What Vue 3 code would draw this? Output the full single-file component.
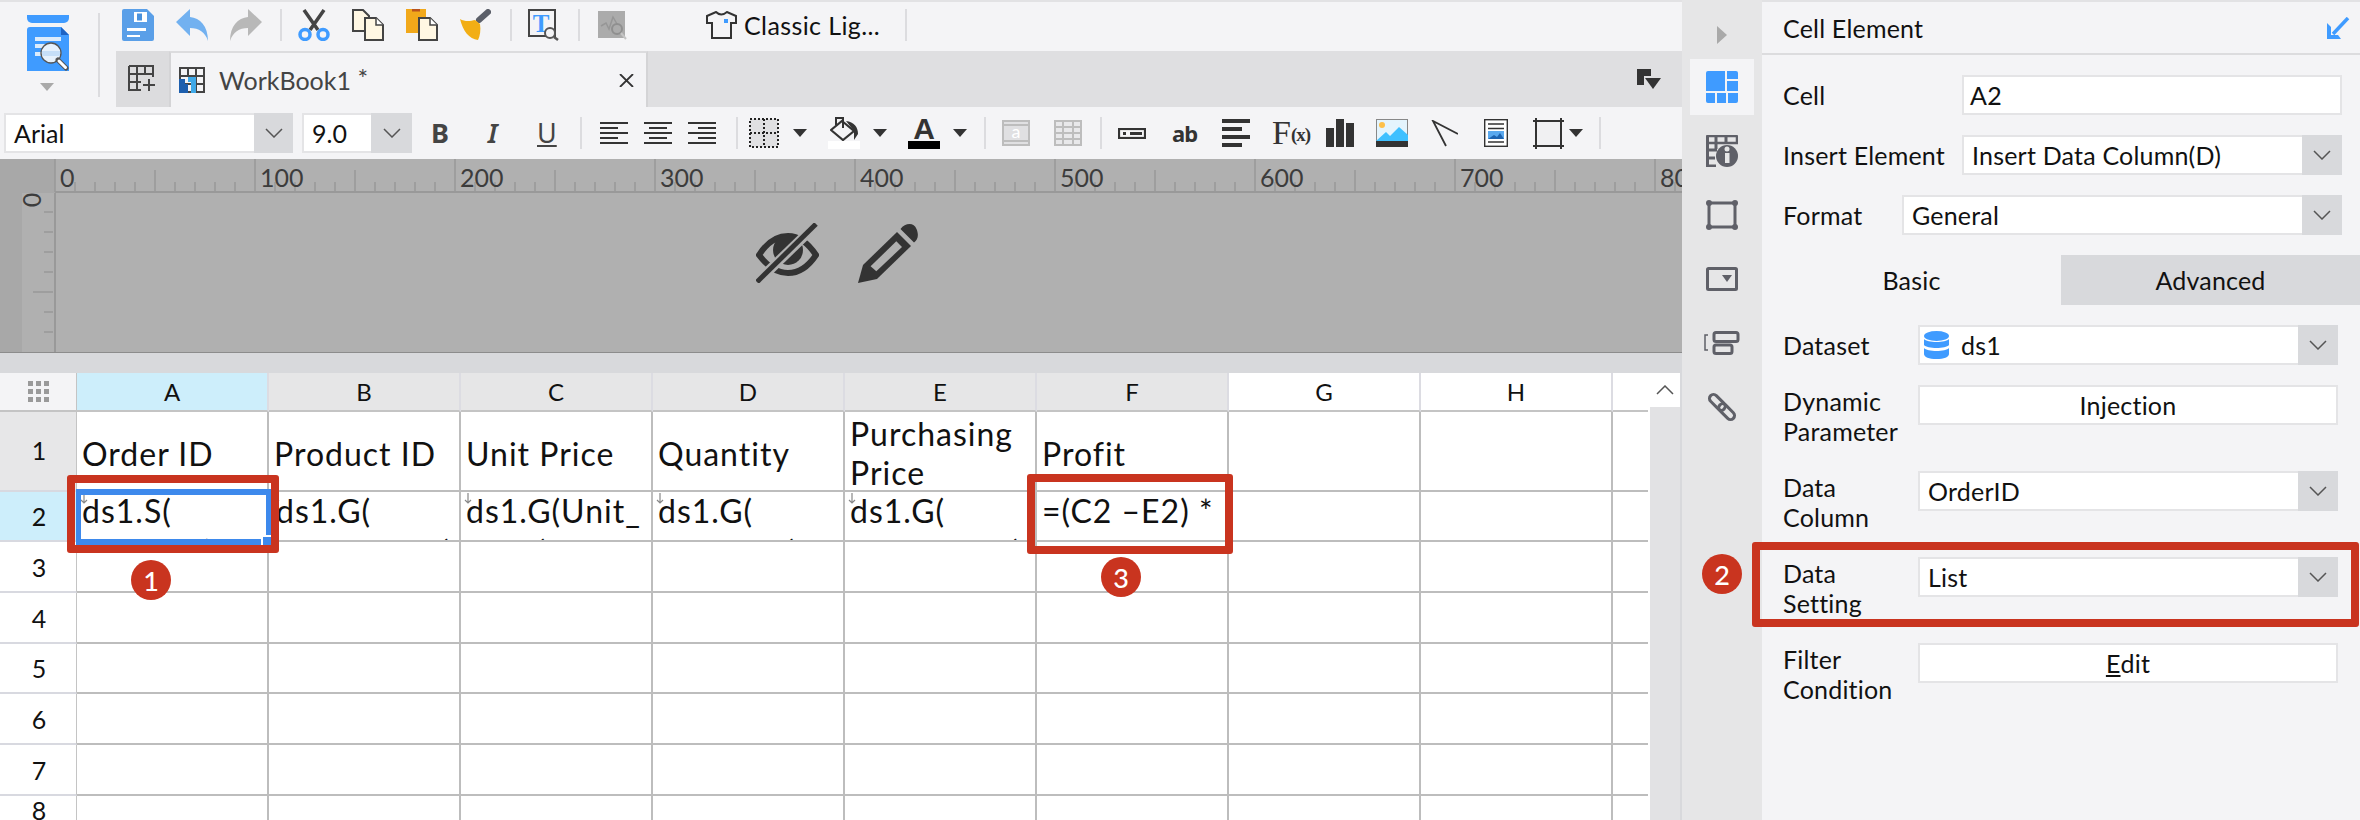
<script setup>
const columns = ['A', 'B', 'C', 'D', 'E', 'F', 'G', 'H']
const usedColumns = ['B', 'C', 'D', 'E', 'F']

const rows = [
  { n: 1, cells: ['Order ID', 'Product ID', 'Unit Price', 'Quantity', 'Purchasing\nPrice', 'Profit', '', ''] },
  { n: 2, cells: ['ds1.S(\nOrderID)', 'ds1.G(\nProduct_ID)', 'ds1.G(Unit_\nPrice)', 'ds1.G(\nQuantity)', 'ds1.G(\nPurchasing)', '=(C2 –E2) *\nD2', '', ''] },
  { n: 3, cells: [] },
  { n: 4, cells: [] },
  { n: 5, cells: [] },
  { n: 6, cells: [] },
  { n: 7, cells: [] },
  { n: 8, cells: [] }
]

const rulerLabels = [0, 100, 200, 300, 400, 500, 600, 700, 800]
const hTicks = Array.from({ length: 82 }, (_, i) => i)
const vTicks = [1, 2, 3, 4, 5, 6, 7]
const gridDots = [0, 1, 2]
</script>

<template>
  <div class="app">
    <div class="left">
      <div class="top">
        <div class="logo-col">
          <div class="logo-box">
            <svg width="42" height="56" viewBox="0 0 42 56">
              <path d="M0 0h42v3a5 5 0 0 1-5 5H5a5 5 0 0 1-5-5z" fill="#3f9bff" />
              <path d="M3 12H34L42 20V56H0V15a3 3 0 0 1 3-3z" fill="#3f9bff" />
              <path d="M34 12L42 20H34z" fill="#1d63c4" />
              <rect x="8" y="22" width="26" height="4" fill="#dcebfb" />
              <rect x="8" y="29" width="12" height="4" fill="#dcebfb" />
              <rect x="8" y="37" width="10" height="4" fill="#dcebfb" />
              <circle cx="24" cy="38" r="10" fill="#e6f1fc" stroke="#555" stroke-width="1.3" />
              <rect x="15" y="36" width="18" height="5" fill="#c6dff8" />
              <path d="M31 45L39 53" stroke="#555" stroke-width="5" stroke-linecap="round" />
              <path d="M32 46L38.5 52.5" stroke="#fff" stroke-width="3" stroke-linecap="round" />
            </svg>
            <span class="logo-caret"></span>
          </div>
          <span class="logo-sep"></span>
        </div>

        <div class="top-right">
          <div class="icon-row">
            <svg class="m6" width="32" height="32" viewBox="0 0 32 32">
              <path d="M2 0H25L32 7V30a2 2 0 0 1-2 2H2a2 2 0 0 1-2-2V2a2 2 0 0 1 2-2z" fill="#5a9fe8" />
              <rect x="12" y="3" width="13" height="10" fill="#fff" />
              <rect x="15" y="4.5" width="5" height="7" fill="#4a92dd" />
              <rect x="5" y="19" width="19" height="3" fill="#fff" />
              <rect x="5" y="26" width="13" height="2" fill="#fff" />
            </svg>
            <svg class="m22" width="32" height="32" viewBox="0 0 32 32">
              <path d="M0 13L14 0V8C24 9 32 17 32 32C29 23 23 19 14 19V27Z" fill="#72b1f0" />
            </svg>
            <svg class="m22" width="32" height="32" viewBox="0 0 32 32">
              <path d="M32 13L18 0V8C8 9 0 17 0 32C3 23 9 19 18 19V27Z" fill="#b8b8b8" />
            </svg>
            <span class="sep m18"></span>
            <svg class="m16" width="32" height="32" viewBox="0 0 32 32">
              <path d="M6 1L20 21M26 1L12 21" stroke="#444" stroke-width="3.5" fill="none" />
              <circle cx="7" cy="25.5" r="5" fill="none" stroke="#3f9bff" stroke-width="3.5" />
              <circle cx="25" cy="25.5" r="5" fill="none" stroke="#3f9bff" stroke-width="3.5" />
            </svg>
            <svg class="m22" width="32" height="32" viewBox="0 0 32 32">
              <path d="M1 1H11L17 7V22H1Z" fill="#fff7e3" stroke="#444" stroke-width="2" />
              <path d="M13 9H24L31 16V31H13Z" fill="#fff7e3" stroke="#444" stroke-width="2" />
              <path d="M24 9V16H31" fill="#fff" stroke="#444" stroke-width="1.5" />
            </svg>
            <svg class="m22" width="32" height="32" viewBox="0 0 32 32">
              <rect width="20" height="24" fill="#f1a81a" />
              <rect x="6" width="8" height="2.5" fill="#b9521d" />
              <path d="M13 9H24L31 16V31H13Z" fill="#fff7e3" stroke="#444" stroke-width="2" />
              <path d="M24 9V16H31" fill="#fff" stroke="#444" stroke-width="1.5" />
            </svg>
            <svg class="m22" width="31" height="32" viewBox="0 0 31 32">
              <path d="M28 3L19 11" stroke="#5b5f69" stroke-width="6" stroke-linecap="round" />
              <path d="M0 10C5 13 11 12 15 11L20 15C21 21 20 27 18 31C9 30 3 22 0 10Z" fill="#f2ae14" />
            </svg>
            <span class="sep m19"></span>
            <svg class="m16" width="31" height="32" viewBox="0 0 31 32">
              <rect x="1" y="1" width="26" height="26" fill="none" stroke="#444" stroke-width="2" />
              <text x="13" y="23" class="t-glyph" text-anchor="middle">T</text>
              <circle cx="22" cy="24" r="5" fill="#f4f4f6" stroke="#555" stroke-width="2" />
              <path d="M26 28L30 31" stroke="#555" stroke-width="2.5" />
            </svg>
            <span class="sep m19"></span>
            <svg class="m18" width="29" height="32" viewBox="0 0 29 32">
              <rect y="2" width="27" height="27" fill="#ababab" />
              <path d="M3 17L8 14L11 20L15 8L19 15" fill="none" stroke="#969696" stroke-width="1.5" />
              <circle cx="19" cy="20" r="5" fill="none" stroke="#8f8f8f" stroke-width="2" />
              <path d="M23 24L28 30" stroke="#c4c4c4" stroke-width="2" />
            </svg>
            <svg class="m79 shirt" width="31" height="28" viewBox="0 0 31 28">
              <path d="M10 1Q15 6 21 1L30 5V12H25V27H6V12H1V5Z" fill="none" stroke="#333" stroke-width="2" />
              <rect x="18" y="8" width="4" height="4" fill="#3f9bff" />
            </svg>
            <span class="theme-name m7">Classic Lig...</span>
            <span class="sep m21"></span>
          </div>

          <div class="tab-row">
            <div class="tab-add">
              <svg width="28" height="26" viewBox="0 0 28 26">
                <path d="M1 1H25V12M1 1V25H13M1 9H25M9 1V25M17 1V9M1 17H13" fill="none" stroke="#444" stroke-width="2" />
                <path d="M21 14V26M15 20H27" fill="none" stroke="#444" stroke-width="2" />
              </svg>
            </div>
            <div class="tab">
              <svg width="26" height="26" viewBox="0 0 26 26">
                <path d="M1 1H25V25H1ZM1 9H25M1 17H25M9 1V9M17 1V25" fill="none" stroke="#444" stroke-width="2" />
                <path d="M0 12H6V17H9V26H0Z" fill="#1d5fae" />
                <path d="M9 10H17V26H12V15H9Z" fill="#3fa9e8" />
              </svg>
              <span class="tab-title">WorkBook1 <span class="tab-star">*</span></span>
              <svg class="tab-close" width="15" height="13" viewBox="0 0 15 13">
                <path d="M1 0L14 13M14 0L1 13" stroke="#333" stroke-width="1.8" />
              </svg>
            </div>
            <div class="tab-rest">
              <svg width="24" height="20" viewBox="0 0 24 20">
                <path d="M0 0H14V7H7V16H0Z" fill="#333" />
                <path d="M8 9H24L16 20Z" fill="#333" />
              </svg>
            </div>
          </div>
        </div>
      </div>

      <div class="format-row">
        <div class="combo font-combo">
          <span class="combo-text">Arial</span>
          <span class="combo-btn"><svg width="18" height="10" viewBox="0 0 18 10"><path d="M1 1L9 9L17 1" fill="none" stroke="#555" stroke-width="1.5" /></svg></span>
        </div>
        <div class="combo size-combo m9">
          <span class="combo-text">9.0</span>
          <span class="combo-btn"><svg width="18" height="10" viewBox="0 0 18 10"><path d="M1 1L9 9L17 1" fill="none" stroke="#555" stroke-width="1.5" /></svg></span>
        </div>
        <span class="fmt-b m19">B</span>
        <span class="fmt-i m37">I</span>
        <span class="fmt-u m38">U</span>
        <span class="sep sep-f m25"></span>
        <svg class="m18" width="28" height="22" viewBox="0 0 28 22"><path d="M0 1H28M0 6H18M0 11H28M0 16H18M0 21H28" stroke="#333" stroke-width="2" /></svg>
        <svg class="m16" width="28" height="22" viewBox="0 0 28 22"><path d="M0 1H28M5 6H23M0 11H28M5 16H23M0 21H28" stroke="#333" stroke-width="2" /></svg>
        <svg class="m16" width="28" height="22" viewBox="0 0 28 22"><path d="M0 1H28M10 6H28M0 11H28M10 16H28M0 21H28" stroke="#333" stroke-width="2" /></svg>
        <span class="sep sep-f m20"></span>
        <svg class="m11" width="30" height="30" viewBox="0 0 30 30">
          <rect x="1" y="1" width="28" height="28" fill="#e0e0e2" stroke="#222" stroke-width="2" stroke-dasharray="2 2" />
          <path d="M15 1V29M1 15H29" stroke="#222" stroke-width="2" stroke-dasharray="2 2" />
        </svg>
        <span class="caret m14"></span>
        <div class="color-btn m21">
          <svg width="28" height="24" viewBox="0 0 28 24">
            <path d="M12 4L24 14L13 23L1 13Z" fill="none" stroke="#333" stroke-width="2.2" />
            <path d="M6 8V1H13V11" fill="none" stroke="#333" stroke-width="2" />
            <path d="M16 4C24 5 28 10 28 17L24 23V14Z" fill="#333" />
          </svg>
          <span class="color-bar bar-white"></span>
        </div>
        <span class="caret m13"></span>
        <div class="color-btn m21">
          <span class="fmt-a">A</span>
          <span class="color-bar bar-black"></span>
        </div>
        <span class="caret m13"></span>
        <span class="sep sep-f m17"></span>
        <svg class="m16" width="28" height="26" viewBox="0 0 28 26">
          <rect x="1" y="1" width="26" height="24" fill="#e0e0e2" stroke="#bdbdbd" stroke-width="2" />
          <path d="M1 5H27M1 21H27" stroke="#bdbdbd" stroke-width="2" />
          <text x="14" y="18" class="dis-a" text-anchor="middle">a</text>
        </svg>
        <svg class="m24" width="28" height="26" viewBox="0 0 28 26">
          <path d="M1 1H27V25H1ZM1 7H27M1 13H27M1 19H27M9 1V25M19 1V25" fill="#e8e8ea" stroke="#bdbdbd" stroke-width="2" />
        </svg>
        <span class="sep sep-f m18"></span>
        <svg class="m16" width="28" height="11" viewBox="0 0 28 11">
          <rect x="1" y="1" width="26" height="9" fill="none" stroke="#333" stroke-width="2.2" />
          <rect x="5" y="4" width="3" height="3" fill="#333" />
          <rect x="12" y="4" width="12" height="3" fill="#333" />
        </svg>
        <span class="fmt-ab m26">ab</span>
        <svg class="m26" width="28" height="28" viewBox="0 0 28 28"><path d="M0 2H28M0 10H20M0 18H28M0 26H20" stroke="#333" stroke-width="4" /></svg>
        <span class="fmt-fx m22"><span class="fx-f">F</span><span class="fx-x">(x)</span></span>
        <svg class="m22" width="28" height="28" viewBox="0 0 28 28">
          <rect y="9" width="8" height="19" fill="#333" />
          <rect x="10" width="8" height="28" fill="#333" />
          <rect x="20" y="4" width="8" height="24" fill="#333" />
        </svg>
        <svg class="m22" width="32" height="28" viewBox="0 0 32 28">
          <rect width="32" height="28" fill="#e4f4fd" />
          <rect x="0.5" y="0.5" width="31" height="27" fill="none" stroke="#888" />
          <circle cx="6" cy="6" r="3" fill="#fdc04a" />
          <path d="M0 22L10 13L14 17L23 8L32 16V23H0Z" fill="#3fc0ff" />
          <rect y="22" width="32" height="6" fill="#333" />
        </svg>
        <svg class="m23" width="27" height="27" viewBox="0 0 27 27"><path d="M15 26L2 1L27 14" fill="none" stroke="#333" stroke-width="1.8" /></svg>
        <svg class="m26" width="24" height="28" viewBox="0 0 24 28">
          <rect x="0.7" y="0.7" width="22.6" height="26.6" fill="#fff" stroke="#333" stroke-width="1.4" />
          <path d="M4 5H20M4 9.5H20M4 23H20" stroke="#333" stroke-width="1.6" />
          <rect x="4" y="12" width="16" height="8" fill="#5aa9ef" />
          <path d="M4 20L10 16L13 18L16 14L20 20Z" fill="#1d63b0" />
        </svg>
        <svg class="m25" width="31" height="31" viewBox="0 0 31 31">
          <rect x="3" y="3" width="25" height="25" fill="#f0f0f2" stroke="#333" stroke-width="2" />
          <path d="M3 0V6M28 0V6M3 25V31M28 25V31M0 3H6M25 3H31M0 28H6M25 28H31" stroke="#333" stroke-width="2" />
        </svg>
        <span class="caret m5"></span>
        <span class="sep sep-f m16"></span>
      </div>

      <div class="ruler-zone">
        <svg class="h-ruler" width="1682" height="34" viewBox="0 0 1682 34">
          <rect width="55" height="34" fill="#a8a8a8" />
          <template v-for="i in hTicks" :key="i">
            <path :d="`M${55 + i * 20} ${i % 10 === 0 ? 0 : i % 5 === 0 ? 11 : 23}V33`" stroke="#999" stroke-width="1.5" />
          </template>
          <path d="M55 33H1682" stroke="#999" stroke-width="2" />
          <text v-for="(label, i) in rulerLabels" :key="label" :x="60 + i * 200" y="28" class="ruler-text">{{ label }}</text>
        </svg>
        <div class="ruler-body">
          <svg class="v-ruler" width="56" height="159" viewBox="0 0 56 159">
            <rect width="22" height="159" fill="#a8a8a8" />
            <rect x="22" width="33" height="159" fill="#b0b0b0" />
            <path d="M55 0V159" stroke="#999" stroke-width="2" />
            <template v-for="i in vTicks" :key="i">
              <path :d="`M${i === 5 ? 33 : 44} ${19 + (i - 1) * 20}H53`" stroke="#999" stroke-width="1.5" />
            </template>
          </svg>
          <span class="v-zero">0</span>
          <div class="canvas">
            <svg width="63" height="60" viewBox="0 0 63 60">
              <path d="M3 32C12 18 22 13 32 13C42 13 52 20 60 32C52 44 42 50 32 50C22 50 12 44 3 32Z" fill="none" stroke="#333" stroke-width="6" />
              <circle cx="32" cy="27" r="15" fill="#333" />
              <path d="M2 58L60 2" stroke="#b0b0b0" stroke-width="10" />
              <path d="M1 59L60 1" stroke="#333" stroke-width="5" />
            </svg>
            <svg class="pencil" width="60" height="60" viewBox="0 0 60 60">
              <path d="M0 60L5 42L39 9L53 23L19 56Z" fill="#333" />
              <path d="M12.6 43.3L38.3 18.3L44 24L18.3 48.3Z" fill="#b0b0b0" />
              <path d="M42.5 6C47 0 56 -1 58.5 6C61 12 60 17 56 19.5Z" fill="#333" />
            </svg>
          </div>
        </div>
      </div>
      <div class="ruler-gap"></div>

      <div class="sheet-wrap">
        <div class="sheet">
          <div class="corner">
            <div class="dots">
              <template v-for="a in gridDots" :key="a">
                <i v-for="b in gridDots" :key="b"></i>
              </template>
            </div>
          </div>
          <div
            v-for="c in columns"
            :key="c"
            class="col-head"
            :class="{ selected: c === 'A', used: usedColumns.includes(c) }"
          >{{ c }}</div>
          <div class="col-tail"></div>

          <template v-for="row in rows" :key="row.n">
            <div class="row-head" :class="'rh' + row.n">{{ row.n }}</div>
            <div
              v-for="(c, i) in columns"
              :key="c"
              class="cell"
              :class="{ 'head-cell': row.n === 1, 'data-cell': row.n === 2, 'offset-b': row.n === 2 && c === 'B' }"
            >
              <svg v-if="row.n === 2 && i < 5" class="expand" width="8" height="11" viewBox="0 0 8 11">
                <path d="M4 0V10M1 7L4 10L7 7" fill="none" stroke="#888" stroke-width="1.2" />
              </svg>
              <span>{{ row.cells[i] }}</span>
            </div>
            <div class="cell-tail"></div>
          </template>
        </div>
        <div class="scrollbar">
          <div class="scroll-up">
            <svg width="18" height="10" viewBox="0 0 18 10"><path d="M1 9L9 1L17 9" fill="none" stroke="#555" stroke-width="1.5" /></svg>
          </div>
          <div class="scroll-track"></div>
        </div>
      </div>
    </div>

    <div class="strip">
      <svg class="strip-arrow" width="10" height="18" viewBox="0 0 10 18"><path d="M0 0L10 9L0 18Z" fill="#a9a9a9" /></svg>
      <div class="strip-item active">
        <svg width="32" height="32" viewBox="0 0 32 32">
          <path d="M2 0H19V20H0V2a2 2 0 0 1 2-2zM21 0H30a2 2 0 0 1 2 2V8H21zM21 10H32V20H21zM0 22H9V32H2a2 2 0 0 1-2-2zM11 22H20V32H11zM22 22H32V30a2 2 0 0 1-2 2H22z" fill="#3f9bff" />
        </svg>
      </div>
      <div class="strip-item">
        <svg width="32" height="32" viewBox="0 0 32 32">
          <path d="M2 1H30a1 1 0 0 1 1 1V8H1V2a1 1 0 0 1 1-1z" fill="none" stroke="#5f6068" stroke-width="2.5" />
          <path d="M1.5 2V31H10M1.5 15H11M1.5 23H9M10 2V14M20 2V8" fill="none" stroke="#5f6068" stroke-width="3" />
          <circle cx="21" cy="21" r="11" fill="#5f6068" />
          <rect x="19" y="18" width="4.5" height="10" fill="#e6e6e7" />
          <circle cx="21" cy="14" r="2.5" fill="#e6e6e7" />
        </svg>
      </div>
      <div class="strip-item">
        <svg width="32" height="30" viewBox="0 0 32 30">
          <rect x="3" y="3" width="26" height="24" fill="none" stroke="#5f6068" stroke-width="3" />
          <circle cx="3" cy="3" r="3" fill="#5f6068" />
          <circle cx="29" cy="3" r="3" fill="#5f6068" />
          <circle cx="3" cy="27" r="3" fill="#5f6068" />
          <circle cx="29" cy="27" r="3" fill="#5f6068" />
        </svg>
      </div>
      <div class="strip-item">
        <svg width="32" height="24" viewBox="0 0 32 24">
          <rect x="1.5" y="1.5" width="29" height="21" rx="1" fill="none" stroke="#5f6068" stroke-width="3" />
          <path d="M16 8H26L21 15Z" fill="#5f6068" />
        </svg>
      </div>
      <div class="strip-item">
        <svg width="36" height="24" viewBox="0 0 36 24">
          <path d="M4 4H1V19H4" fill="none" stroke="#5f6068" stroke-width="1.5" />
          <rect x="10" y="1.5" width="24" height="9" rx="2" fill="none" stroke="#5f6068" stroke-width="3" />
          <rect x="10" y="14" width="18" height="8.5" rx="2" fill="none" stroke="#5f6068" stroke-width="3" />
        </svg>
      </div>
      <div class="strip-item">
        <svg width="30" height="30" viewBox="0 0 30 30">
          <rect x="1" y="6" width="19" height="8" rx="4" fill="none" stroke="#5f6068" stroke-width="3" transform="rotate(45 10 10)" />
          <rect x="10" y="16" width="19" height="8" rx="4" fill="none" stroke="#5f6068" stroke-width="3" transform="rotate(45 20 20)" />
        </svg>
      </div>
    </div>

    <div class="panel">
      <div class="panel-head">
        <span>Cell Element</span>
        <svg width="23" height="22" viewBox="0 0 23 22">
          <path d="M21 1L6 17" stroke="#3f9bff" stroke-width="3.5" />
          <path d="M0 6V22H14L11 18H4V10Z" fill="#3f9bff" />
        </svg>
      </div>

      <div class="form-top">
        <div class="f-row">
          <label class="lbl-wide">Cell</label>
          <div class="input">A2</div>
        </div>
        <div class="f-row">
          <label class="lbl-wide">Insert Element</label>
          <div class="combo form-combo">
            <span class="combo-text">Insert Data Column(D)</span>
            <span class="combo-btn wide"><svg width="18" height="10" viewBox="0 0 18 10"><path d="M1 1L9 9L17 1" fill="none" stroke="#555" stroke-width="1.5" /></svg></span>
          </div>
        </div>
        <div class="f-row">
          <label class="lbl-narrow">Format</label>
          <div class="combo form-combo">
            <span class="combo-text">General</span>
            <span class="combo-btn wide"><svg width="18" height="10" viewBox="0 0 18 10"><path d="M1 1L9 9L17 1" fill="none" stroke="#555" stroke-width="1.5" /></svg></span>
          </div>
        </div>
      </div>

      <div class="tabs">
        <div class="tab-basic">Basic</div>
        <div class="tab-adv">Advanced</div>
      </div>

      <div class="form-bottom">
        <div class="b-row single">
          <label>Dataset</label>
          <div class="combo form-combo">
            <span class="combo-text with-icon">
              <svg width="25" height="28" viewBox="0 0 25 28">
                <ellipse cx="12.5" cy="5" rx="12.5" ry="5" fill="#3f9bff" />
                <path d="M0 8C3 12 22 12 25 8V14C22 18 3 18 0 14Z" fill="#3f9bff" />
                <path d="M0 17C3 21 22 21 25 17V23C25 26 20 28 12.5 28S0 26 0 23Z" fill="#3f9bff" />
              </svg>
              ds1
            </span>
            <span class="combo-btn wide"><svg width="18" height="10" viewBox="0 0 18 10"><path d="M1 1L9 9L17 1" fill="none" stroke="#555" stroke-width="1.5" /></svg></span>
          </div>
        </div>
        <div class="b-row">
          <label>Dynamic<br />Parameter</label>
          <div class="btn">Injection</div>
        </div>
        <div class="b-row">
          <label>Data<br />Column</label>
          <div class="combo form-combo">
            <span class="combo-text">OrderID</span>
            <span class="combo-btn wide"><svg width="18" height="10" viewBox="0 0 18 10"><path d="M1 1L9 9L17 1" fill="none" stroke="#555" stroke-width="1.5" /></svg></span>
          </div>
        </div>
        <div class="b-row">
          <label>Data<br />Setting</label>
          <div class="combo form-combo">
            <span class="combo-text">List</span>
            <span class="combo-btn wide"><svg width="18" height="10" viewBox="0 0 18 10"><path d="M1 1L9 9L17 1" fill="none" stroke="#555" stroke-width="1.5" /></svg></span>
          </div>
        </div>
        <div class="b-row">
          <label>Filter<br />Condition</label>
          <div class="btn"><u>E</u>dit</div>
        </div>
      </div>
    </div>

    <!-- selection and callouts drawn over the screenshot -->
    <div class="selection"><span class="sel-handle"></span></div>
    <div class="callout box-1"></div>
    <div class="callout box-2"></div>
    <div class="callout box-3"></div>
    <div class="badge badge-1">1</div>
    <div class="badge badge-2">2</div>
    <div class="badge badge-3">3</div>
  </div>
</template>

<style>
body {
  margin: 0;
  overflow: hidden;
}
</style>

<style scoped>
.app {
  position: relative;
  display: flex;
  width: 2360px;
  height: 820px;
  overflow: hidden;
  background: #f4f4f6;
  font-family: Lato, "Liberation Sans", sans-serif;
  color: #111;
}
.m5 { margin-left: 5px; }
.m6 { margin-left: 6px; }
.m7 { margin-left: 7px; }
.m9 { margin-left: 9px; }
.m11 { margin-left: 11px; }
.m13 { margin-left: 13px; }
.m14 { margin-left: 14px; }
.m16 { margin-left: 16px; }
.m17 { margin-left: 17px; }
.m18 { margin-left: 18px; }
.m19 { margin-left: 19px; }
.m20 { margin-left: 20px; }
.m21 { margin-left: 21px; }
.m22 { margin-left: 22px; }
.m23 { margin-left: 23px; }
.m24 { margin-left: 24px; }
.m25 { margin-left: 25px; }
.m26 { margin-left: 26px; }
.m37 { margin-left: 37px; }
.m38 { margin-left: 38px; }
.m79 { margin-left: 79px; }

.left {
  width: 1682px;
  flex: none;
  display: flex;
  flex-direction: column;
}
.top {
  display: flex;
  height: 107px;
  flex: none;
  border-top: 2px solid #e2e2e4;
  box-sizing: border-box;
}
.logo-col {
  width: 116px;
  flex: none;
  display: flex;
  align-items: flex-start;
}
.logo-box {
  width: 98px;
  display: flex;
  flex-direction: column;
  align-items: center;
  padding-top: 13px;
  box-sizing: border-box;
}
.logo-box svg { margin-left: -3px; }
.logo-caret {
  margin-top: 12px;
  margin-left: -4px;
  border-left: 7px solid transparent;
  border-right: 7px solid transparent;
  border-top: 8px solid #a9a9a9;
}
.logo-sep {
  width: 2px;
  height: 84px;
  margin-top: 11px;
  background: #dcdcdf;
}
.top-right {
  flex: 1;
  display: flex;
  flex-direction: column;
  min-width: 0;
}
.icon-row {
  height: 49px;
  flex: none;
  display: flex;
  align-items: flex-start;
  padding-top: 7px;
  box-sizing: border-box;
}
.icon-row svg { flex: none; }
.sep {
  flex: none;
  width: 2px;
  height: 32px;
  background: #dcdcdf;
}
.shirt { margin-top: 2px; }
.theme-name {
  width: 140px;
  flex: none;
  font-size: 25px;
  line-height: 32px;
  letter-spacing: 0.4px;
  white-space: nowrap;
}
.tab-row {
  flex: 1;
  display: flex;
  background: #dfdfe1;
}
.tab-add {
  width: 53px;
  flex: none;
  padding: 14px 0 0 12px;
  box-sizing: border-box;
  background: #dcdcde;
}
.tab {
  width: 479px;
  flex: none;
  display: flex;
  align-items: center;
  padding: 0 12px 0 8px;
  box-sizing: border-box;
  background: #f4f4f6;
  border-top: 2px solid #dcdcde;
  border-left: 2px solid #d4d4d6;
  border-right: 2px solid #d4d4d6;
  color: #444;
}
.tab-title {
  margin-left: 14px;
  font-size: 25px;
}
.tab-star {
  position: relative;
  top: -2px;
}
.tab-close { margin-left: auto; }
.tab-rest {
  flex: 1;
  display: flex;
  align-items: flex-start;
  justify-content: flex-end;
  padding: 18px 21px 0 0;
}

.format-row {
  height: 52px;
  flex: none;
  display: flex;
  align-items: center;
  padding-left: 4px;
  box-sizing: border-box;
}
.format-row svg { flex: none; }
.combo {
  display: flex;
  height: 40px;
  flex: none;
  box-sizing: border-box;
  background: #fff;
}
.combo-text {
  flex: 1;
  min-width: 0;
  display: flex;
  align-items: center;
  padding-left: 8px;
  border: 2px solid #e4e4e6;
  border-right: 0;
  font-size: 25px;
  white-space: nowrap;
}
.combo-btn {
  width: 39px;
  flex: none;
  display: flex;
  align-items: center;
  justify-content: center;
  background: #d8d9dc;
}
.combo-btn.wide { width: 40px; }
.font-combo { width: 289px; }
.size-combo { width: 110px; }
.size-combo .combo-btn { width: 41px; }
.fmt-b, .fmt-i, .fmt-u {
  width: 18px;
  flex: none;
  text-align: center;
  font-size: 27px;
  line-height: 30px;
  color: #444;
  font-family: "Noto Sans", sans-serif;
}
.fmt-b { font-weight: 700; }
.fmt-i { font-style: italic; width: 13px; font-weight: 600; }
.fmt-u { text-decoration: underline; }
.sep-f { height: 32px; }
.caret {
  flex: none;
  border-left: 7px solid transparent;
  border-right: 7px solid transparent;
  border-top: 8px solid #333;
}
.color-btn {
  width: 32px;
  flex: none;
  display: flex;
  flex-direction: column;
  align-items: center;
  height: 32px;
}
.color-bar {
  width: 32px;
  height: 8px;
  flex: none;
}
.bar-white { background: #fff; }
.bar-black { background: #000; }
.fmt-a {
  height: 24px;
  font-family: "Liberation Sans", sans-serif;
  font-weight: 700;
  font-size: 30px;
  line-height: 24px;
  color: #333;
}
.fmt-ab {
  width: 24px;
  flex: none;
  font-family: "Noto Sans", sans-serif;
  font-weight: 700;
  font-size: 22px;
  color: #333;
  letter-spacing: -1px;
}
.fmt-fx {
  width: 32px;
  flex: none;
  display: flex;
  align-items: center;
  font-family: "Liberation Serif", serif;
  color: #333;
}
.fx-f { font-size: 34px; line-height: 34px; }
.fx-x { font-size: 19px; font-weight: 700; letter-spacing: -1px; line-height: 22px; margin-top: 4px; }
.t-glyph {
  font-family: "Liberation Serif", serif;
  font-weight: 700;
  font-size: 25px;
  fill: #3f9bff;
}
.dis-a {
  font-size: 18px;
  fill: #fff;
}

.ruler-zone {
  height: 193px;
  flex: none;
  display: flex;
  flex-direction: column;
  background: #b0b0b0;
  border-bottom: 1px solid #8c8c8c;
}
.h-ruler { flex: none; }
.ruler-text {
  font-size: 25px;
  fill: #3c3c3c;
}
.ruler-body {
  position: relative;
  flex: 1;
  display: flex;
}
.v-ruler { flex: none; }
.v-zero {
  position: absolute;
  left: 23px;
  top: 0;
  width: 20px;
  height: 14px;
  display: flex;
  align-items: center;
  justify-content: center;
  transform: rotate(90deg);
  font-size: 25px;
  color: #3c3c3c;
}
.canvas {
  flex: 1;
  display: flex;
  align-items: flex-start;
  padding: 30px 0 0 700px;
  box-sizing: border-box;
}
.pencil { margin-left: 39px; }
.ruler-gap {
  height: 20px;
  flex: none;
  background: #d8d9dc;
}

.sheet-wrap {
  flex: 1;
  display: flex;
  min-height: 0;
  background: #fff;
}
.sheet {
  width: 1648px;
  flex: none;
  display: grid;
  grid-template-columns: 77px repeat(8, 192px) 35px;
  grid-template-rows: 39px 80px 50px 51px 51px 50px 51px 51px 30px;
  overflow: hidden;
  font-size: 32px;
  color: #111;
}
.corner {
  display: flex;
  align-items: center;
  justify-content: center;
  background: #f4f4f6;
  border-right: 1px solid #c4c4c4;
  border-bottom: 2px solid #c4c4c4;
  box-sizing: border-box;
}
.dots {
  display: grid;
  grid-template-columns: repeat(3, 5px);
  gap: 3px;
}
.dots i {
  width: 5px;
  height: 5px;
  background: #9a9a9a;
}
.col-head, .col-tail {
  display: flex;
  align-items: center;
  justify-content: center;
  font-size: 24px;
  border-bottom: 2px solid #c4c4c4;
  box-sizing: border-box;
  background: #fff;
}
.col-head { border-right: 2px solid #dcdce2; }
.col-head.used { background: #e6e6e7; }
.col-head.selected { background: #cdeefb; }
.row-head {
  display: flex;
  align-items: center;
  justify-content: center;
  padding-left: 2px;
  font-size: 25px;
  border-right: 1px solid #c4c4c4;
  border-bottom: 2px solid #d8d9e0;
  box-sizing: border-box;
  background: #fff;
}
.rh1 { background: #e7e7e8; padding-bottom: 2px; }
.rh2 { background: #cdeefb; }
.cell, .cell-tail {
  position: relative;
  border-right: 2px solid #bdbdbd;
  border-bottom: 2px solid #bdbdbd;
  box-sizing: border-box;
  overflow: hidden;
}
.cell-tail { border-right: 0; }
.cell span {
  display: block;
  white-space: pre-line;
  padding-left: 5px;
  letter-spacing: 1px;
}
.head-cell {
  display: flex;
  align-items: center;
  padding-top: 4px;
  line-height: 39px;
}
.data-cell { line-height: 41px; }
.data-cell span { margin-top: -2px; }
.offset-b span { padding-left: 7px; }
.expand {
  position: absolute;
  left: 3px;
  top: 1px;
}
.scrollbar {
  flex: 1;
  display: flex;
  flex-direction: column;
  padding: 2px 0 0 2px;
  box-sizing: border-box;
  border-right: 2px solid #d8d9dc;
}
.scroll-up {
  height: 30px;
  flex: none;
  display: flex;
  align-items: center;
  justify-content: center;
}
.scroll-track {
  flex: 1;
  margin-top: 2px;
  background: #e2e2e4;
}

.strip {
  width: 80px;
  flex: none;
  display: flex;
  flex-direction: column;
  align-items: center;
  background: #e6e6e7;
  padding-top: 26px;
  box-sizing: border-box;
}
.strip-arrow {
  flex: none;
  margin-bottom: 15px;
}
.strip-item {
  width: 64px;
  height: 56px;
  flex: none;
  margin-bottom: 8px;
  display: flex;
  align-items: center;
  justify-content: center;
}
.strip-item.active { background: #f4f4f6; }

.panel {
  flex: 1;
  display: flex;
  flex-direction: column;
  border-top: 2px solid #e2e2e4;
  box-sizing: border-box;
  font-size: 25px;
  letter-spacing: 0.2px;
}
.panel-head {
  height: 53px;
  flex: none;
  display: flex;
  align-items: center;
  justify-content: space-between;
  padding: 0 10px 0 21px;
  border-bottom: 2px solid #dcdcde;
  box-sizing: border-box;
}
.form-top {
  display: flex;
  flex-direction: column;
  gap: 20px;
  padding: 20px 18px 20px 21px;
}
.f-row {
  display: flex;
  align-items: center;
  height: 40px;
}
.lbl-wide { width: 179px; flex: none; }
.lbl-narrow { width: 119px; flex: none; }
.input {
  flex: 1;
  height: 40px;
  display: flex;
  align-items: center;
  padding-left: 6px;
  border: 2px solid #e4e4e6;
  box-sizing: border-box;
  background: #fff;
}
.form-combo { flex: 1; }
.tabs {
  display: flex;
  height: 50px;
  flex: none;
}
.tab-basic, .tab-adv {
  flex: 1;
  display: flex;
  align-items: center;
  justify-content: center;
}
.tab-adv { background: #d8d9dc; }
.form-bottom {
  display: flex;
  flex-direction: column;
  gap: 20px;
  padding: 20px 22px 0 21px;
}
.b-row {
  display: flex;
  align-items: flex-start;
  height: 66px;
}
.b-row.single {
  align-items: center;
  height: 40px;
}
.b-row label {
  width: 135px;
  flex: none;
  line-height: 30px;
  padding-top: 1px;
}
.b-row.single label { padding-top: 0; }
.btn {
  flex: 1;
  height: 40px;
  display: flex;
  align-items: center;
  justify-content: center;
  border: 2px solid #e4e4e6;
  box-sizing: border-box;
  background: #fff;
}
.with-icon svg {
  margin: 0 12px 0 -4px;
  flex: none;
}

.selection {
  position: absolute;
  left: 76px;
  top: 489px;
  width: 195px;
  height: 56px;
  box-sizing: border-box;
  border: solid #3d89ec;
  border-width: 6px 5px 6px 5px;
}
.sel-handle {
  position: absolute;
  right: -5px;
  bottom: -6px;
  width: 8px;
  height: 8px;
  background: #3d89ec;
  border-left: 2px solid #fff;
  border-top: 2px solid #fff;
}
.callout {
  position: absolute;
  box-sizing: border-box;
  border: 8px solid #c9341f;
  border-radius: 3px;
}
.box-1 { left: 67px; top: 475px; width: 212px; height: 78px; }
.box-2 { left: 1752px; top: 542px; width: 607px; height: 85px; }
.box-3 { left: 1027px; top: 474px; width: 206px; height: 80px; }
.badge {
  position: absolute;
  width: 40px;
  height: 40px;
  border-radius: 50%;
  background: #c9341f;
  color: #fff;
  display: flex;
  align-items: center;
  justify-content: center;
  font-size: 27px;
  font-weight: 500;
}
.badge-1 { left: 131px; top: 560px; }
.badge-2 { left: 1702px; top: 554px; }
.badge-3 { left: 1101px; top: 557px; }
</style>
